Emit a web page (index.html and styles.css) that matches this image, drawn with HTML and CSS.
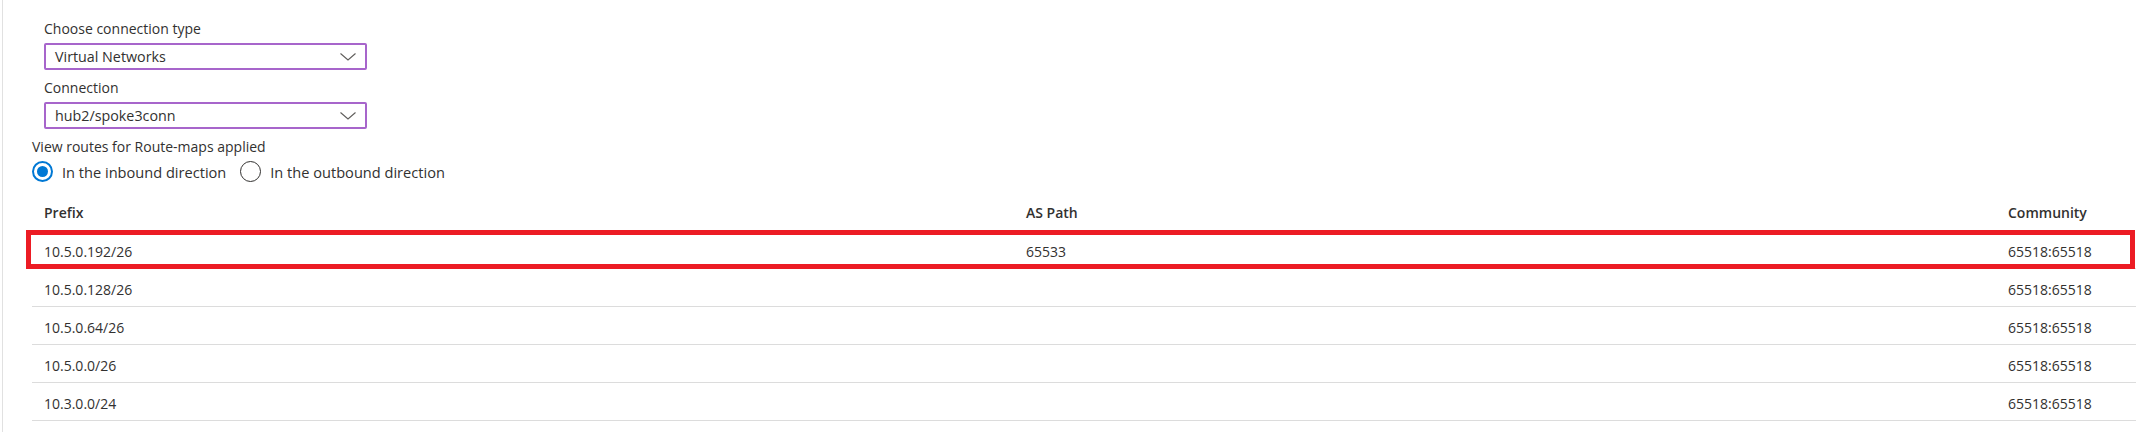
FILE: index.html
```html
<!DOCTYPE html>
<html lang="en">

<head>
    <meta charset="UTF-8">
    <meta name="viewport" content="width=device-width, initial-scale=1.0">
    <title>Effective routes</title>
    <link rel="stylesheet" href="styles.css">
</head>

<body>
    <div class="page">
        <div class="field">
            <div class="field-label">Choose connection type</div>
            <div class="dropdown">
                <span>Virtual Networks</span>
                <svg class="chevron" width="16" height="8" viewBox="0 0 16 8"><path d="M0.5 0.5 L8 7 L15.5 0.5" fill="none" stroke="#605e5c" stroke-width="1.1"/></svg>
            </div>
        </div>
        <div class="field">
            <div class="field-label">Connection</div>
            <div class="dropdown">
                <span>hub2/spoke3conn</span>
                <svg class="chevron" width="16" height="8" viewBox="0 0 16 8"><path d="M0.5 0.5 L8 7 L15.5 0.5" fill="none" stroke="#605e5c" stroke-width="1.1"/></svg>
            </div>
        </div>

        <div class="group-label">View routes for Route-maps applied</div>
        <div class="radio-group">
            <label class="radio-option">
                <span class="radio checked"></span>
                <span>In the inbound direction</span>
            </label>
            <label class="radio-option">
                <span class="radio"></span>
                <span>In the outbound direction</span>
            </label>
        </div>

        <div class="routes">
            <div class="routes-row routes-head">
                <div class="cell">Prefix</div>
                <div class="cell">AS Path</div>
                <div class="cell">Community</div>
            </div>
            <div class="routes-row highlighted">
                <div class="cell">10.5.0.192/26</div>
                <div class="cell">65533</div>
                <div class="cell">65518:65518</div>
                <div class="highlight-box"></div>
            </div>
            <div class="routes-row">
                <div class="cell">10.5.0.128/26</div>
                <div class="cell"></div>
                <div class="cell">65518:65518</div>
            </div>
            <div class="routes-row">
                <div class="cell">10.5.0.64/26</div>
                <div class="cell"></div>
                <div class="cell">65518:65518</div>
            </div>
            <div class="routes-row">
                <div class="cell">10.5.0.0/26</div>
                <div class="cell"></div>
                <div class="cell">65518:65518</div>
            </div>
            <div class="routes-row">
                <div class="cell">10.3.0.0/24</div>
                <div class="cell"></div>
                <div class="cell">65518:65518</div>
            </div>
        </div>
    </div>
</body>

</html>
```

FILE: styles.css
```css
body {
    margin: 0;
    background-color: #fff;
    font-family: "Open Sans", sans-serif;
    font-size: 14px;
    line-height: 20px;
    color: #323130;
}

.page {
    margin-left: 2px;
    border-left: 1px solid #e1e1e1;
    padding: 19px 0 0 29px;
    min-height: 413px;
}

/* dropdown fields */
.field {
    padding-left: 12px;
    margin-bottom: 8px;
}

.field-label {
    margin-bottom: 4px;
}

.dropdown {
    width: 323px;
    height: 27px;
    box-sizing: border-box;
    border: 2px solid #a765cb;
    border-radius: 2px;
    display: flex;
    align-items: center;
    justify-content: space-between;
    padding: 0 9px 0 9px;
    font-size: 14.3px;
}

.chevron {
    display: block;
    margin-top: 1px;
}

/* radio buttons */
.radio-group {
    display: flex;
    align-items: center;
    gap: 14px;
    margin-top: 4px;
    font-size: 14.6px;
}

.radio-option {
    display: flex;
    align-items: center;
    gap: 9px;
}

.radio {
    width: 21px;
    height: 21px;
    box-sizing: border-box;
    border: 1.5px solid #323130;
    border-radius: 50%;
    display: flex;
    align-items: center;
    justify-content: center;
}

.radio.checked {
    border: 2px solid #0078d4;
}

.radio.checked::after {
    content: "";
    width: 11px;
    height: 11px;
    border-radius: 50%;
    background-color: #0078d4;
}

/* routes table */
.routes {
    margin-top: 11px;
}

.routes-row {
    display: grid;
    grid-template-columns: 982px 982px 1fr;
    height: 38px;
    box-sizing: border-box;
    border-bottom: 1px solid #dcdcdc;
    position: relative;
}

.routes-row .cell {
    padding: 11px 0 0 12px;
    white-space: nowrap;
}

.routes-head {
    border-bottom: none;
    font-weight: 600;
}

.routes-head .cell {
    padding-top: 10px;
}

.highlight-box {
    position: absolute;
    left: -6px;
    right: 1px;
    top: -1px;
    bottom: -1px;
    border: 5px solid #ec1c24;
}
```
